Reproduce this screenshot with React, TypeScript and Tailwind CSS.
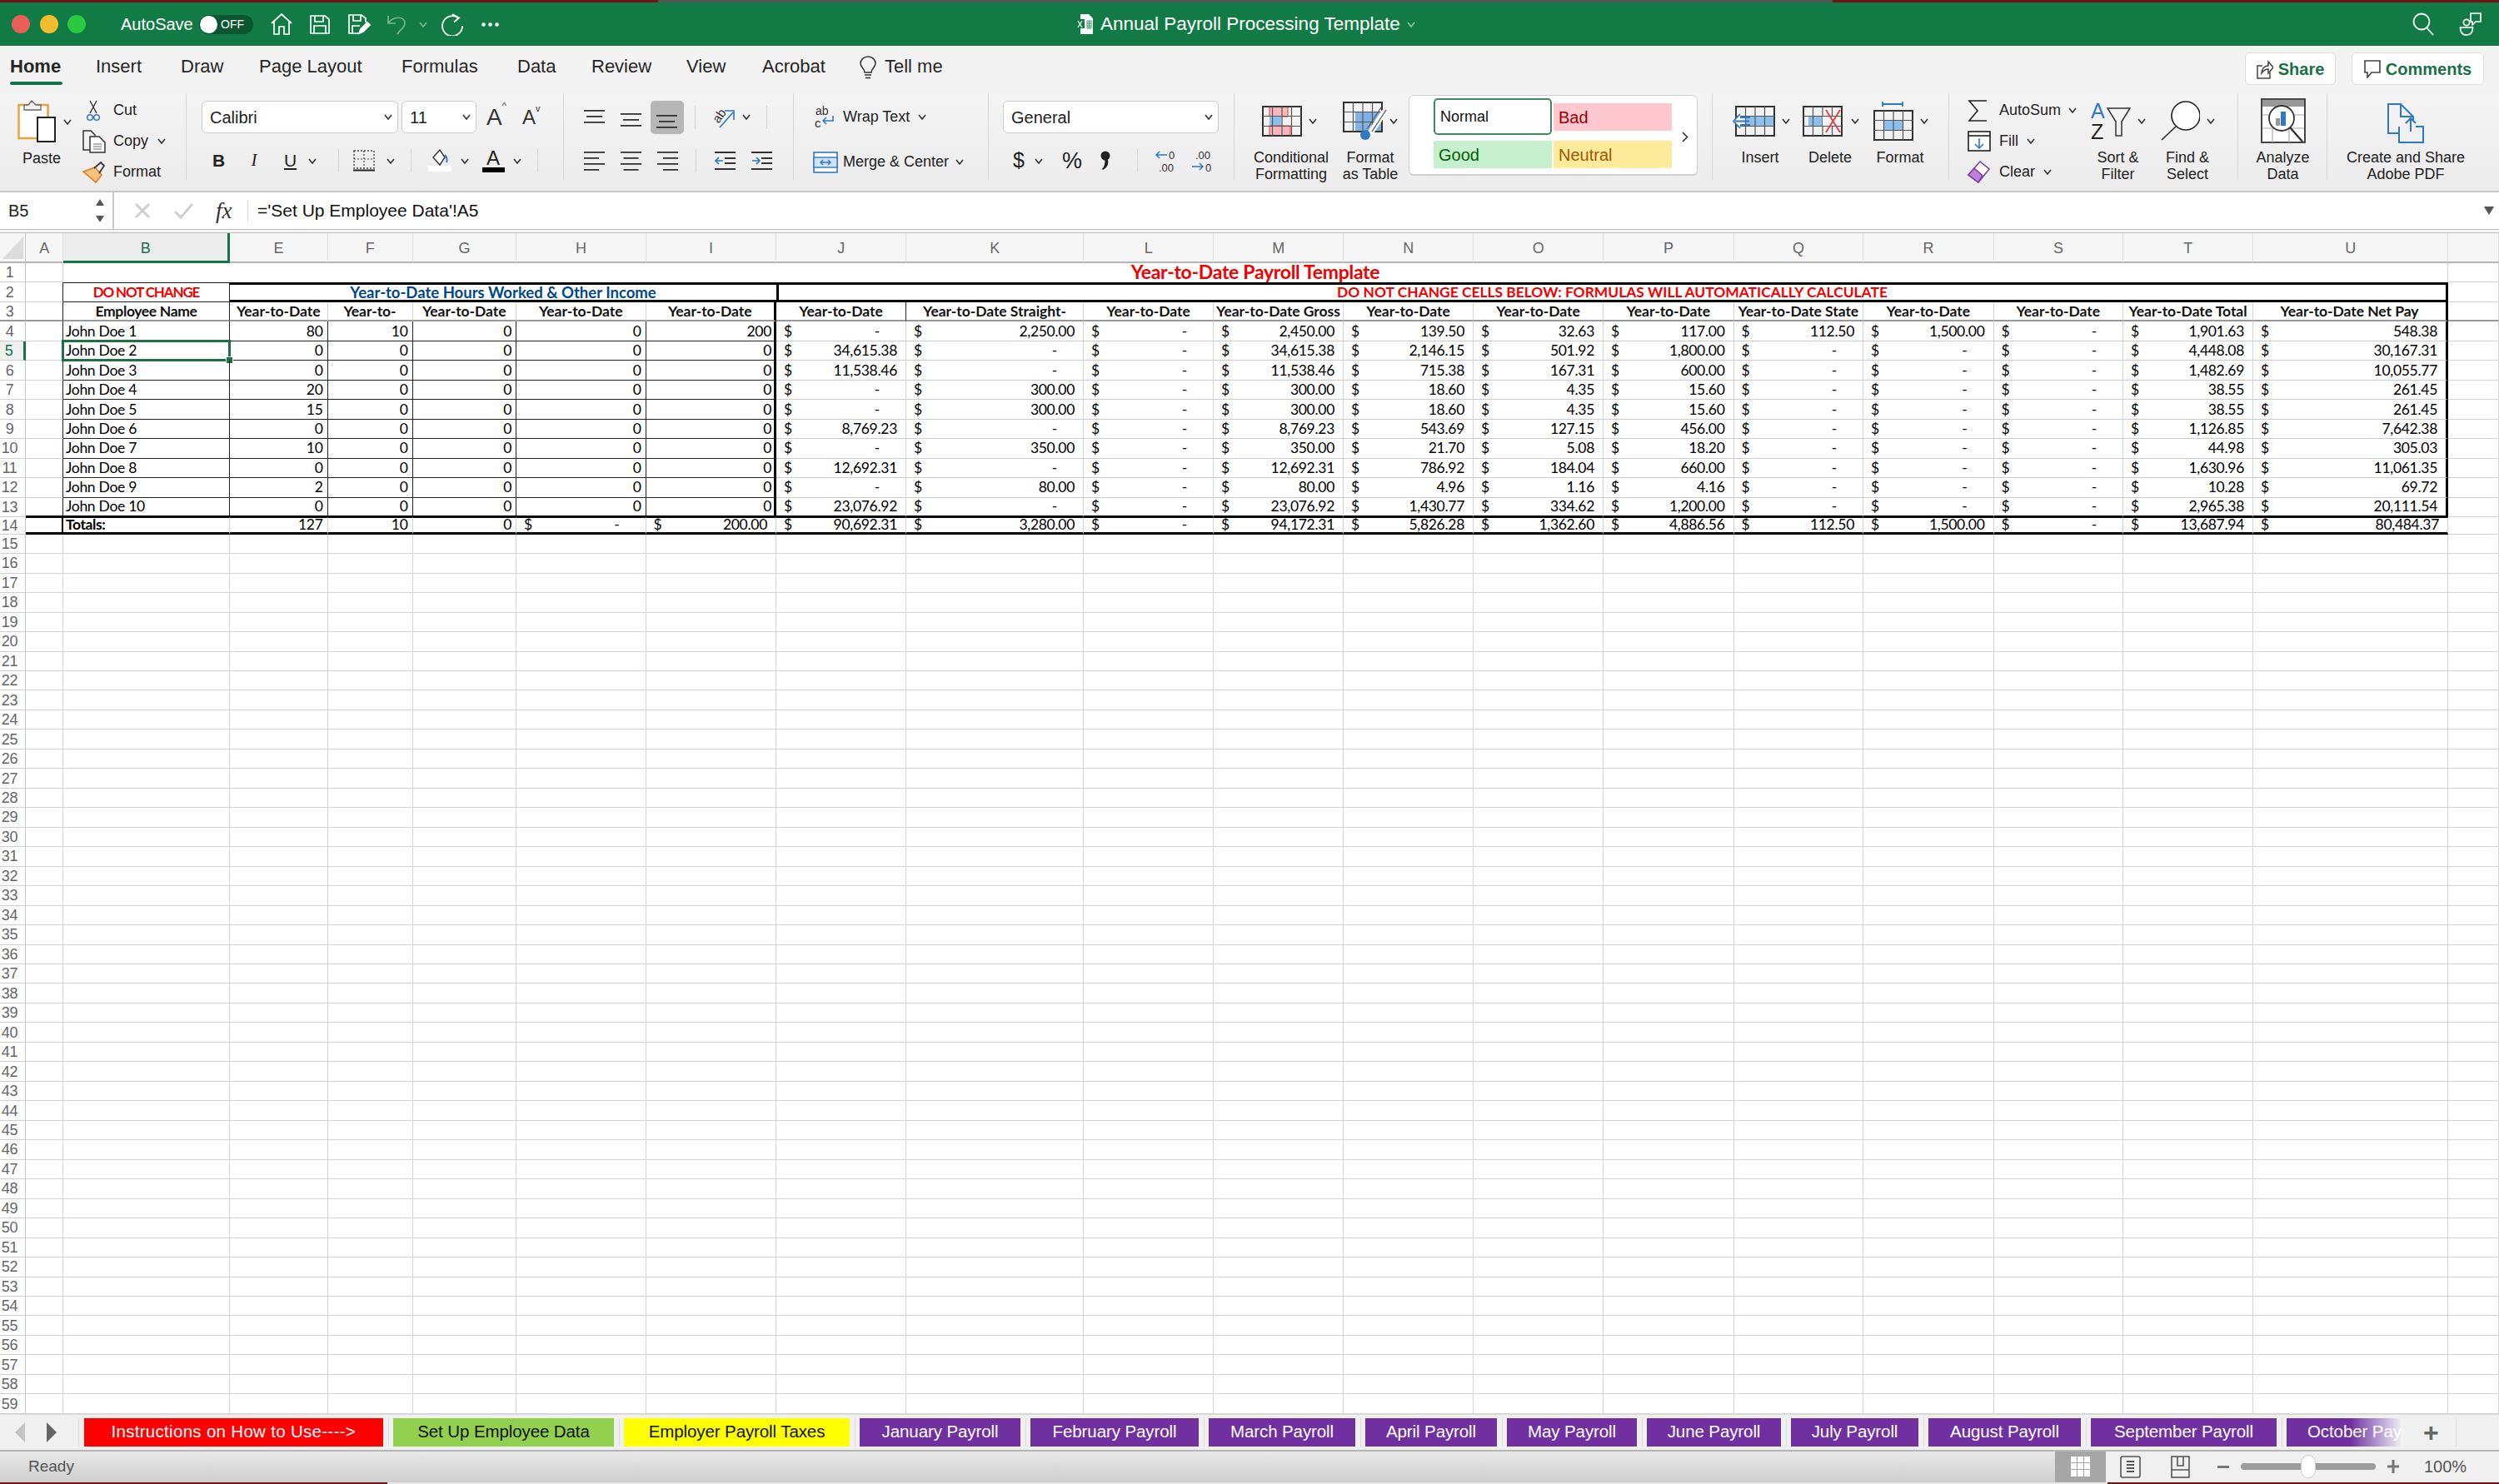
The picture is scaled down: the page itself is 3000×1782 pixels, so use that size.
import React from 'react';

const Chev = ({ c = '#333' }: { c?: string }) => (
  <svg width="10" height="7" viewBox="0 0 10 7" className="shrink-0"><path d="M1 1l4 5 4-5" stroke={c} strokeWidth="1.6" fill="none" /></svg>
);

const VSep = () => <div className="w-px h-[28px] bg-[#d4d4d4] shrink-0" />;

const Lines = ({ ys, align }: { ys: number[]; align: 'l' | 'c' | 'r' }) => (
  <svg width="26" height="26" viewBox="0 0 26 26">
    {ys.map((y, i) => {
      const short = ys.length === 4 && i % 2 === 1;
      const w = short ? 18 : 25;
      const x = align === 'l' ? 0 : align === 'r' ? 25 - w : (25 - w) / 2;
      return <rect key={i} x={x} y={y} width={w} height="1.8" fill="#333" />;
    })}
  </svg>
);

const TopLines = ({ o }: { o: number }) => (
  <svg width="26" height="26" viewBox="0 0 26 26">
    <rect x="0" y={o} width="25" height="1.8" fill="#333" />
    <rect x="3" y={o + 7} width="19" height="1.8" fill="#333" />
    <rect x="0" y={o + 14} width="25" height="1.8" fill="#333" />
  </svg>
);

const Tab = ({ w, children, active }: { w: string; children: React.ReactNode; active?: boolean }) => (
  <div className={w + ' shrink-0 pt-[11px] flex flex-col text-[22px] leading-[28px] text-[#262626]'}>
    <span className={active ? 'font-semibold whitespace-nowrap' : 'whitespace-nowrap'}>{children}</span>
    {active ? <div className="w-[63px] h-[4px] rounded-sm bg-[#12754a] mt-[4px]" /> : null}
  </div>
);

const Big = ({ w, left, icon, chev = true, lines }: { w: string; left: string; icon: React.ReactNode; chev?: boolean; lines: string[] }) => (
  <div className={w + ' shrink-0 flex flex-col items-center h-[104px]'}>
    <div className={left + ' shrink-0 w-full h-[66px] flex items-center gap-[8px]'}>
      {icon}
      {chev ? <Chev /> : null}
    </div>
    <div className="shrink-0 text-[18px] leading-[20px] text-[#222] text-center whitespace-nowrap mt-[1px]">
      {lines.map((l) => <div key={l}>{l}</div>)}
    </div>
  </div>
);

const GridIcon = ({ children }: { children?: React.ReactNode }) => (
  <g>
    {children}
    <rect x="1" y="1" width="46" height="35" fill="none" stroke="#333" strokeWidth="2" />
    <path d="M1 12.5H47M1 24.5H47M12.5 1V36M24 1V36M35.5 1V36" stroke="#555" strokeWidth="1.2" fill="none" />
  </g>
);

const names = Array.from({ length: 10 }, (_, i) => 'John Doe ' + (i + 1));
const E = ['80', '0', '0', '20', '15', '0', '10', '0', '2', '0'];
const Fc = ['10', '0', '0', '0', '0', '0', '0', '0', '0', '0'];
const cur: string[][] = [
  ['-', '34,615.38', '11,538.46', '-', '-', '8,769.23', '-', '12,692.31', '-', '23,076.92', '90,692.31'],
  ['2,250.00', '-', '-', '300.00', '300.00', '-', '350.00', '-', '80.00', '-', '3,280.00'],
  ['-', '-', '-', '-', '-', '-', '-', '-', '-', '-', '-'],
  ['2,450.00', '34,615.38', '11,538.46', '300.00', '300.00', '8,769.23', '350.00', '12,692.31', '80.00', '23,076.92', '94,172.31'],
  ['139.50', '2,146.15', '715.38', '18.60', '18.60', '543.69', '21.70', '786.92', '4.96', '1,430.77', '5,826.28'],
  ['32.63', '501.92', '167.31', '4.35', '4.35', '127.15', '5.08', '184.04', '1.16', '334.62', '1,362.60'],
  ['117.00', '1,800.00', '600.00', '15.60', '15.60', '456.00', '18.20', '660.00', '4.16', '1,200.00', '4,886.56'],
  ['112.50', '-', '-', '-', '-', '-', '-', '-', '-', '-', '112.50'],
  ['1,500.00', '-', '-', '-', '-', '-', '-', '-', '-', '-', '1,500.00'],
  ['-', '-', '-', '-', '-', '-', '-', '-', '-', '-', '-'],
  ['1,901.63', '4,448.08', '1,482.69', '38.55', '38.55', '1,126.85', '44.98', '1,630.96', '10.28', '2,965.38', '13,687.94'],
  ['548.38', '30,167.31', '10,055.77', '261.45', '261.45', '7,642.38', '305.03', '11,061.35', '69.72', '20,111.54', '80,484.37'],
];
const heads = ['Year-to-Date', 'Year-to-Date Straight-', 'Year-to-Date', 'Year-to-Date Gross', 'Year-to-Date', 'Year-to-Date', 'Year-to-Date', 'Year-to-Date State', 'Year-to-Date', 'Year-to-Date', 'Year-to-Date Total', 'Year-to-Date Net Pay'];
const colLetters = ['A', 'B', 'E', 'F', 'G', 'H', 'I', 'J', 'K', 'L', 'M', 'N', 'O', 'P', 'Q', 'R', 'S', 'T', 'U', ''];

const C = ({ className, children }: { className: string; children?: React.ReactNode }) => (
  <div className={'flex items-center min-w-0 whitespace-nowrap ' + className}>{children}</div>
);

const Money = ({ v, className }: { v: string; className: string }) => (
  <C className={'justify-between pl-[9px] pr-[10px] ' + className}>
    <span>$</span>
    <span className={v === '-' ? 'pr-[21px]' : ''}>{v}</span>
  </C>
);

const RowHead = ({ n }: { n: number }) => (
  <div className={'flex items-center justify-center pr-[7px] text-[18px] [font-family:\'Liberation_Sans\',sans-serif] relative ' + (n === 5 ? 'bg-[#f0f0f0] text-[#12754a] border-r-[3px] border-r-[#12754a] border-b border-b-[#cfcfcf]' : n === 3 ? 'text-[#666] bg-white border-r border-r-[#c9c9c9] border-b-2 border-b-[#999]' : 'text-[#666] bg-white border-r border-b border-r-[#c9c9c9] border-b-[#cfcfcf]')}>{n}</div>
);

const Sheet = () => {
  const rows: React.ReactNode[] = [];
  rows.push(
    <div key="corner" className="bg-[#f6f6f6] border-b-2 border-b-[#b5b5b5] border-r border-r-[#c9c9c9] flex items-center pl-[3px]">
      <svg width="25" height="27" viewBox="0 0 25 27"><polygon points="25,0 25,27 0,27" fill="#dcdcdc" /></svg>
    </div>
  );
  colLetters.forEach((l) => {
    rows.push(
      <div key={'h' + l} className={'flex items-center justify-center pt-[2px] text-[18px] [font-family:\'Liberation_Sans\',sans-serif] ' + (l === 'B' ? 'bg-[#ececec] text-[#12754a] border-b-[3px] border-b-[#12754a] border-r-[3px] border-r-[#12754a]' : 'bg-[#f6f6f6] text-[#666] border-b-2 border-b-[#b5b5b5] border-r border-r-[#dedede]')}>{l}</div>
    );
  });
  const grid = 'border-r border-b border-r-[#d4d4d4] border-b-[#d4d4d4]';
  rows.push(<RowHead key="r1" n={1} />);
  rows.push(<C key="a1" className={grid} />);
  rows.push(<C key="t1" className="col-span-18 justify-center pb-[2px] border-r border-r-[#d4d4d4] font-bold text-[23px] leading-[23px] text-[#f00000]">Year-to-Date Payroll Template</C>);
  rows.push(<C key="v1" className={grid} />);
  rows.push(<RowHead key="r2" n={2} />);
  rows.push(<C key="a2" className="border-r border-b border-r-[#222] border-b-[#d4d4d4]" />);
  rows.push(<C key="b2" className="justify-center font-bold text-[17px] text-[#f00000] tracking-[-1.15px] border-r border-t border-b border-[#222]">DO NOT CHANGE</C>);
  rows.push(<C key="e2" className="col-span-5 justify-center font-bold text-[18.5px] text-[#00468c] tracking-[0px] border-t-[3px] border-b-[3px] border-black">Year-to-Date Hours Worked &amp; Other Income</C>);
  rows.push(<C key="j2" className="col-span-12 justify-center font-bold text-[17.4px] text-[#f00000] tracking-[0px] border-t-[3px] border-b-[3px] border-l-[3px] border-r-[3px] border-black">DO NOT CHANGE CELLS BELOW: FORMULAS WILL AUTOMATICALLY CALCULATE</C>);
  rows.push(<C key="v2" className={grid} />);
  rows.push(<RowHead key="r3" n={3} />);
  rows.push(<C key="a3" className="border-r border-b-2 border-r-[#222] border-b-[#999]" />);
  rows.push(<C key="b3" className="justify-center font-bold text-[17.5px] tracking-[-0.35px] text-[#111] border-r border-b-2 border-r-[#222] border-b-[#999]">Employee Name</C>);
  const hs = 'justify-center font-bold text-[17.5px] tracking-[-0.05px] text-[#111] border-b-2 border-b-[#999] ';
  rows.push(<C key="e3" className={hs + 'border-r border-r-[#d4d4d4]'}>Year-to-Date</C>);
  rows.push(<C key="f3" className={hs + 'border-r border-r-[#d4d4d4]'}>Year-to-</C>);
  rows.push(<C key="g3" className={hs + 'border-r border-r-[#d4d4d4]'}>Year-to-Date</C>);
  rows.push(<C key="h3" className={hs + 'border-r border-r-[#d4d4d4]'}>Year-to-Date</C>);
  rows.push(<C key="i3" className={hs + 'border-r-[3px] border-r-black'}>Year-to-Date</C>);
  heads.forEach((h, i) => {
    rows.push(<C key={'hd' + i} className={hs + (i === 0 ? 'border-r border-r-[#222]' : i === 11 ? 'border-r-[3px] border-r-black' : 'border-r border-r-[#d4d4d4]')}>{h}</C>);
  });
  rows.push(<C key="v3" className="border-r border-b-2 border-r-[#d4d4d4] border-b-[#999]" />);
  names.forEach((name, i) => {
    const n = i + 4;
    const last = i === 9;
    const black = last ? 'border-r border-b-2 border-r-[#222] border-b-black' : 'border-r border-b border-r-[#222] border-b-[#222]';
    rows.push(<RowHead key={'r' + n} n={n} />);
    rows.push(<C key={'a' + n} className={last ? 'border-r border-b-2 border-r-[#222] border-b-black' : 'border-r border-b border-r-[#222] border-b-[#d4d4d4]'} />);
    rows.push(
      <div key={'b' + n} className={'relative flex items-center pl-[3px] whitespace-nowrap tracking-[-0.3px] ' + black}>
        {name}
        {n === 5 ? (
          <>
            <div className="absolute -left-[2px] -top-[2px] -right-[2px] -bottom-[2px] border-[3px] border-[#1f7045]" />
            <div className="absolute -right-[5px] -bottom-[5px] w-[9px] h-[9px] bg-[#1f7045] border border-white" />
          </>
        ) : null}
      </div>
    );
    const num = 'justify-end pr-[5px] ' + black;
    rows.push(<C key={'e' + n} className={num}>{E[i]}</C>);
    rows.push(<C key={'f' + n} className={num}>{Fc[i]}</C>);
    rows.push(<C key={'g' + n} className={num}>0</C>);
    rows.push(<C key={'h' + n} className={num}>0</C>);
    rows.push(<C key={'i' + n} className={last ? 'justify-end pr-[3px] border-r-[3px] border-b-2 border-r-black border-b-black' : 'justify-end pr-[3px] border-r-[3px] border-b border-r-black border-b-[#222]'}>{i === 0 ? '200' : '0'}</C>);
    cur.forEach((col, k) => {
      const cls = last
        ? k === 11 ? 'border-r-[3px] border-b-2 border-r-black border-b-black' : 'border-r border-b-2 border-r-[#d4d4d4] border-b-black'
        : k === 11 ? 'border-r-[3px] border-b border-r-black border-b-[#cdcdcd]' : 'border-r border-b border-r-[#d4d4d4] border-b-[#cdcdcd]';
      rows.push(<Money key={'c' + k + n} v={col[i]} className={cls} />);
    });
    rows.push(<C key={'v' + n} className={grid} />);
  });
  const t = 'border-t border-b-[3px] border-r border-t-black border-b-black border-r-[#d4d4d4] ';
  rows.push(<RowHead key="r14" n={14} />);
  rows.push(<C key="a14" className="border-t border-b-[3px] border-r-2 border-t-black border-b-black border-r-black" />);
  rows.push(<C key="b14" className={t + 'pl-[3px] font-bold tracking-[-0.4px]'}>Totals:</C>);
  rows.push(<C key="e14" className={t + 'justify-end pr-[5px]'}>127</C>);
  rows.push(<C key="f14" className={t + 'justify-end pr-[5px]'}>10</C>);
  rows.push(<C key="g14" className={t + 'justify-end pr-[5px]'}>0</C>);
  rows.push(<Money key="h14" v="-" className={t} />);
  rows.push(<Money key="i14" v="200.00" className={t} />);
  cur.forEach((col, k) => rows.push(<Money key={'t' + k} v={col[10]} className={t} />));
  rows.push(<C key="v14" className={grid} />);
  for (let n = 15; n <= 59; n++) {
    rows.push(<RowHead key={'r' + n} n={n} />);
    for (let c = 0; c < 20; c++) rows.push(<div key={'x' + n + '-' + c} className={grid} />);
  }
  return (
    <div className="shrink-0 grid grid-cols-[31px_45px_200px_117.5px_102px_124.5px_155.5px_156.5px_156px_213px_156px_156px_156px_156px_156.5px_155.5px_156.5px_155.5px_156px_234px_61px] grid-rows-[36px_repeat(13,23.47px)_20.6px_repeat(45,23.47px)] bg-white text-[17.5px] leading-[18px] text-black tracking-[-0.3px] [font-family:Lato,sans-serif]">
      {rows}
    </div>
  );
};

const SheetTab = ({ w, bg, dark, children }: { w: string; bg: string; dark?: boolean; children: React.ReactNode }) => (
  <div className={w + ' ' + bg + ' h-[34px] shrink-0 flex items-center justify-center text-[20.5px] tracking-[-0.1px] whitespace-nowrap ' + (dark ? 'text-[#111]' : 'text-white')}>{children}</div>
);
const TabSep = () => <div className="w-px h-[34px] bg-[#dcdcdc] shrink-0" />;

export default function App() {
  return (
    <div className="w-[3000px] h-[1782px] overflow-hidden flex flex-col bg-[#f3f3f3] [font-family:'Liberation_Sans',sans-serif]">
      <div className="h-[3px] shrink-0 flex">
        <div className="w-[790px] bg-[#6e1414]" />
        <div className="w-[1410px] bg-[#555]" />
        <div className="flex-1 bg-[#6e1414]" />
      </div>
      {/* title bar */}
      <div className="h-[52px] shrink-0 bg-[#127a44] flex items-center text-white">
        <div className="ml-[14px] w-[22px] h-[22px] rounded-full bg-[#ec5f57]" />
        <div className="ml-[12px] w-[22px] h-[22px] rounded-full bg-[#f5bd2e]" />
        <div className="ml-[11px] w-[22px] h-[22px] rounded-full bg-[#2bc940]" />
        <div className="ml-[42px] w-[94px] text-[20px] whitespace-nowrap">AutoSave</div>
        <div className="w-[65px] h-[23px] rounded-full bg-[#0d5530] flex items-center">
          <div className="ml-[1px] w-[21px] h-[21px] rounded-full bg-white" />
          <span className="ml-[4px] text-[14px] font-medium">OFF</span>
        </div>
        <svg className="ml-[20px]" width="28" height="26" viewBox="0 0 28 26" fill="none" stroke="white" strokeWidth="1.7"><path d="M2 12L14 1l12 11M5 10v15h6v-9h6v9h6V10" /></svg>
        <svg className="ml-[19px]" width="26" height="25" viewBox="0 0 26 25" fill="none" stroke="white" strokeWidth="1.7"><path d="M2 2h17l5 4v17H2zM7 2v7h10V2M6 23v-9h14v9" /></svg>
        <svg className="ml-[20px]" width="28" height="26" viewBox="0 0 28 26" fill="none" stroke="white" strokeWidth="1.7"><path d="M13 24H2V2h15l5 4v5M7 2v7h9V2M6 24v-9h9" /><path d="M14 24l2-5 8-8 3 3-8 8z" fill="white" /></svg>
        <svg className="ml-[19px]" width="25" height="26" viewBox="0 0 25 26" fill="none" stroke="#7eb596" strokeWidth="1.7"><path d="M2 3v9h9M2 12C8 3 22 3 22 12c0 5-6 8-9 13" /></svg>
        <div className="ml-[14px]"><Chev c="#7eb596" /></div>
        <svg className="ml-[16px]" width="28" height="27" viewBox="0 0 28 27" fill="none" stroke="white" strokeWidth="1.8"><path d="M21 5.5A12 12 0 1 0 26 15M14 1l8 4.5-6 5" /></svg>
        <svg className="ml-[21px]" width="21" height="5" viewBox="0 0 21 5" fill="white"><circle cx="2.5" cy="2.5" r="2.3" /><circle cx="10.5" cy="2.5" r="2.3" /><circle cx="18.5" cy="2.5" r="2.3" /></svg>
        <svg className="ml-[693px]" width="20" height="24" viewBox="0 0 20 24"><path d="M5 0h10l5 5v19H5z" fill="white" /><rect x="0" y="6" width="10" height="11" fill="#127a44" /><path d="M2 8l5 8M7 8l-5 8" stroke="white" strokeWidth="1.2" /><path d="M13 8h5v9h-5zM13 11h5M13 14h5M15.5 8v9" stroke="#127a44" strokeWidth="0.8" fill="none" /></svg>
        <span className="ml-[9px] w-[366px] text-[22.5px] whitespace-nowrap">Annual Payroll Processing Template</span>
        <div className="ml-[2px]"><Chev c="#8fc4a6" /></div>
        <svg className="ml-[1197px]" width="26" height="28" viewBox="0 0 26 28" fill="none" stroke="white" strokeWidth="1.8"><circle cx="11" cy="11" r="9.5" /><path d="M17 18l8 9" /></svg>
        <svg className="ml-[30px]" width="28" height="28" viewBox="0 0 28 28" fill="none" stroke="white" strokeWidth="1.7"><circle cx="9" cy="12" r="3.6" /><path d="M1.5 18h15c0 5-2 9-7.5 9S1.5 23 1.5 18z" /><path d="M14 1h12v10h-6l-4 4v-4h-2z" /></svg>
      </div>
      {/* tabs */}
      <div className="h-[57px] shrink-0 flex pl-[12px]">
        <Tab w="w-[103px]" active>Home</Tab>
        <Tab w="w-[102px]">Insert</Tab>
        <Tab w="w-[94px]">Draw</Tab>
        <Tab w="w-[171px]">Page Layout</Tab>
        <Tab w="w-[139px]">Formulas</Tab>
        <Tab w="w-[89px]">Data</Tab>
        <Tab w="w-[114px]">Review</Tab>
        <Tab w="w-[91px]">View</Tab>
        <Tab w="w-[117px]">Acrobat</Tab>
        <svg className="mt-[12px] shrink-0" width="20" height="28" viewBox="0 0 20 28" fill="none" stroke="#333" strokeWidth="1.5"><path d="M6 20c0-5-5-6-5-11a9 8 0 0 1 18 0c0 5-5 6-5 11z" /><path d="M6 23h8M7 26.5h6" /></svg>
        <Tab w="w-[122px] ml-[10px]">Tell me</Tab>
        <div className="ml-[1511px] mt-[8px] w-[109px] h-[39px] rounded-[5px] bg-white border border-[#dcdcdc] flex items-center justify-center gap-[6px] text-[20px] font-bold text-[#1a7147] shrink-0">
          <svg width="20" height="24" viewBox="0 0 20 24" fill="none" stroke="#444" strokeWidth="1.5"><path d="M7 8H1v15h15v-7" /><path d="M6 17c0-6 4-9 8-9V3l6 7-6 7v-5c-4 0-6 2-8 5z" /></svg>
          <span>Share</span>
        </div>
        <div className="ml-[19px] mt-[8px] w-[159px] h-[39px] rounded-[5px] bg-white border border-[#dcdcdc] flex items-center justify-center gap-[6px] text-[20px] font-bold text-[#1a7147] shrink-0">
          <svg width="20" height="22" viewBox="0 0 20 22" fill="none" stroke="#444" strokeWidth="1.6"><path d="M1 1h18v14H9l-5 6v-6H1z" /></svg>
          <span>Comments</span>
        </div>
      </div>
      {/* ribbon */}
      <div className="h-[119px] shrink-0 flex bg-gradient-to-b from-[#f4f4f4] to-[#ececec] border-b-2 border-[#c6c6c6] text-[18px] text-[#222]">
        {/* clipboard */}
        <div className="w-[224px] h-[104px] shrink-0 border-r border-[#d6d6d6] flex">
          <div className="w-[99px] flex flex-col shrink-0">
            <div className="flex items-center h-[62px] pl-[21px] pt-[6px] gap-[8px] shrink-0">
              <svg width="47" height="52" viewBox="0 0 47 52"><rect x="1.5" y="6" width="35" height="40" fill="#fdfdfd" stroke="#e8a33d" strokeWidth="2.5" /><path d="M8 12V6h5l4-5 5 5h6v6z" fill="#f1f1f1" stroke="#666" strokeWidth="1.3" /><rect x="24" y="21" width="21" height="29" fill="white" stroke="#222" strokeWidth="2" /></svg>
              <Chev />
            </div>
            <div className="w-full pl-[27px] leading-[20px] mt-[6px] shrink-0">Paste</div>
          </div>
          <div className="flex flex-col pt-[2px]">
            <div className="h-[37px] flex items-center shrink-0">
              <div className="w-[37px]">
                <svg className="ml-[4px]" width="18" height="26" viewBox="0 0 18 26" fill="none"><path d="M5 1l8 15M13 1L5 16" stroke="#333" strokeWidth="1.4" /><circle cx="5" cy="21" r="3.3" stroke="#2f78c4" strokeWidth="1.5" /><circle cx="13" cy="21" r="3.3" stroke="#2f78c4" strokeWidth="1.5" /></svg>
              </div>
              <span>Cut</span>
            </div>
            <div className="h-[37px] flex items-center shrink-0">
              <div className="w-[37px]">
                <svg width="28" height="28" viewBox="0 0 28 28" fill="none" stroke="#333" strokeWidth="1.5"><path d="M9 24H1V1h9l5 5v2" /><path d="M9 8h11l7 7v12H9z" fill="white" /><path d="M13 17h10M13 20h10M13 23h10" stroke="#666" strokeWidth="1" /></svg>
              </div>
              <span>Copy</span>
              <div className="ml-[11px]"><Chev /></div>
            </div>
            <div className="h-[37px] flex items-center shrink-0">
              <div className="w-[37px]">
                <svg width="27" height="26" viewBox="0 0 27 26" fill="none"><path d="M1 12l14-5 8 9-7 9z" fill="#f6c27d" stroke="#e07f1f" strokeWidth="1.6" /><path d="M14 8L22 1l4 4-6 9" stroke="#333" strokeWidth="1.8" /></svg>
              </div>
              <span>Format</span>
            </div>
          </div>
        </div>
        {/* font */}
        <div className="w-[453px] h-[104px] shrink-0 border-r border-[#d6d6d6] flex flex-col">
          <div className="mt-[9px] h-[39px] flex items-center ml-[18px] shrink-0">
            <div className="w-[236px] h-[39px] bg-white border border-[#cbcbcb] rounded-[6px] flex items-center justify-between pl-[9px] pr-[6px] text-[20px]"><span>Calibri</span><Chev /></div>
            <div className="ml-[4px] w-[90px] h-[39px] bg-white border border-[#cbcbcb] rounded-[6px] flex items-center justify-between pl-[9px] pr-[6px] text-[20px]"><span>11</span><Chev /></div>
            <div className="ml-[12px] w-[28px] text-[28px] font-light flex items-start text-[#333]"><span>A</span><span className="text-[11px] leading-[14px]">^</span></div>
            <div className="ml-[15px] w-[28px] text-[24px] font-light flex items-start text-[#333]"><span>A</span><span className="text-[11px] leading-[14px]">v</span></div>
          </div>
          <div className="mt-[18px] h-[30px] flex items-center ml-[18px] shrink-0">
            <div className="w-[41px] flex justify-center text-[21px] font-bold">B</div>
            <div className="w-[44px] flex justify-center text-[21px] italic [font-family:'Liberation_Serif',serif]">I</div>
            <div className="w-[43px] flex justify-center text-[21px] underline">U</div>
            <div className="w-[17px]"><Chev /></div>
            <div className="w-[19px]" />
            <VSep />
            <svg className="ml-[17px]" width="27" height="26" viewBox="0 0 27 26" fill="none"><rect x="1" y="1" width="24" height="21" stroke="#444" strokeWidth="1.4" strokeDasharray="2 2" /><path d="M13 1v21M1 11h24" stroke="#444" strokeWidth="1.2" strokeDasharray="2 2" /><path d="M0 24.5h26" stroke="#222" strokeWidth="2" /></svg>
            <div className="ml-[13px]"><Chev /></div>
            <div className="ml-[19px]"><VSep /></div>
            <svg className="ml-[20px]" width="28" height="28" viewBox="0 0 28 28" fill="none"><path d="M6 10L14 1l6 9-6 9z" fill="#fff" stroke="#333" strokeWidth="1.4" /><path d="M20 7c3 3 3 7 2 9" stroke="#2f78c4" strokeWidth="2" /><rect x="0" y="20" width="28" height="7" fill="#fff" /></svg>
            <div className="ml-[11px]"><Chev /></div>
            <div className="ml-[15px] w-[28px] flex flex-col items-center">
              <span className="text-[24px] leading-[22px] font-light">A</span>
              <div className="w-[27px] h-[6px] bg-black" />
            </div>
            <div className="ml-[10px]"><Chev /></div>
            <div className="ml-[19px]"><VSep /></div>
          </div>
        </div>
        {/* alignment */}
        <div className="w-[276px] h-[104px] shrink-0 border-r border-[#d6d6d6] flex flex-col">
          <div className="mt-[9px] h-[39px] flex items-center ml-[15px] shrink-0">
            <div className="w-[44px] flex justify-center"><TopLines o={4} /></div>
            <div className="w-[44px] flex justify-center"><TopLines o={8} /></div>
            <div className="w-[40px] h-[40px] ml-[1px] rounded-[5px] bg-[#b6b6b6] flex items-center justify-center"><TopLines o={10} /></div>
            <div className="ml-[13px]"><VSep /></div>
            <svg className="ml-[21px] overflow-visible" width="28" height="26" viewBox="0 0 28 26" fill="none"><text x="0" y="16" fontSize="15" fill="#333" fontFamily="Liberation Sans" transform="rotate(-55 8 12)">ab</text><path d="M8 25l16-18M14 5h11v11" stroke="#2f78c4" strokeWidth="1.6" /></svg>
            <div className="ml-[7px]"><Chev /></div>
            <div className="ml-[19px]"><VSep /></div>
          </div>
          <div className="mt-[18px] h-[30px] flex items-center ml-[15px] shrink-0">
            <div className="w-[44px] flex justify-center"><Lines ys={[2, 9, 16, 23]} align="l" /></div>
            <div className="w-[44px] flex justify-center"><Lines ys={[2, 9, 16, 23]} align="c" /></div>
            <div className="w-[44px] flex justify-center"><Lines ys={[2, 9, 16, 23]} align="r" /></div>
            <div className="ml-[11px]"><VSep /></div>
            <svg className="ml-[22px]" width="26" height="26" viewBox="0 0 26 26" fill="none"><path d="M0 3h25M12 10h13M12 16h13M0 23h25" stroke="#333" strokeWidth="1.8" /><path d="M10 13H1M5 9l-4 4 4 4" stroke="#2f78c4" strokeWidth="1.7" /></svg>
            <svg className="ml-[18px]" width="26" height="26" viewBox="0 0 26 26" fill="none"><path d="M0 3h25M12 10h13M12 16h13M0 23h25" stroke="#333" strokeWidth="1.8" /><path d="M1 13h9M6 9l4 4-4 4" stroke="#2f78c4" strokeWidth="1.7" /></svg>
          </div>
        </div>
        {/* wrap */}
        <div className="w-[234px] h-[104px] shrink-0 border-r border-[#d6d6d6] flex flex-col">
          <div className="mt-[9px] h-[39px] flex items-center ml-[25px] shrink-0">
            <svg className="shrink-0 overflow-visible" width="28" height="28" viewBox="0 0 28 28" fill="none"><text x="1" y="11" fontSize="14" fill="#333" fontFamily="Liberation Sans">ab</text><text x="0" y="26" fontSize="15" fill="#333" fontFamily="Liberation Sans">c</text><path d="M22 12v6H10M14 14l-4 4 4 4" stroke="#2f78c4" strokeWidth="1.5" /></svg>
            <span className="ml-[6px] whitespace-nowrap">Wrap Text</span>
            <div className="ml-[10px]"><Chev /></div>
          </div>
          <div className="mt-[18px] h-[30px] flex items-center ml-[23px] pt-[3px] shrink-0">
            <svg className="shrink-0" width="30" height="26" viewBox="0 0 30 26" fill="none"><rect x="1" y="1" width="28" height="24" fill="#fff" stroke="#2f78c4" strokeWidth="1.6" /><rect x="1" y="7" width="28" height="12" fill="#cfe3f6" stroke="#2f78c4" strokeWidth="1.4" /><path d="M9 13h12M12 10l-3 3 3 3M18 10l3 3-3 3" stroke="#2f78c4" strokeWidth="1.4" /></svg>
            <span className="ml-[6px] whitespace-nowrap">Merge &amp; Center</span>
            <div className="ml-[8px]"><Chev /></div>
          </div>
        </div>
        {/* number */}
        <div className="w-[295px] h-[104px] shrink-0 border-r border-[#d6d6d6] flex flex-col">
          <div className="mt-[9px] h-[39px] flex items-center ml-[17px] shrink-0">
            <div className="w-[259px] h-[39px] bg-white border border-[#cbcbcb] rounded-[6px] flex items-center justify-between pl-[9px] pr-[6px] text-[20px]"><span>General</span><Chev /></div>
          </div>
          <div className="mt-[18px] h-[30px] flex items-center ml-[29px] shrink-0">
            <span className="text-[25px] font-light w-[16px]">$</span>
            <div className="ml-[10px]"><Chev /></div>
            <span className="ml-[23px] text-[27px] w-[28px] font-light">%</span>
            <svg className="ml-[18px] shrink-0" width="12" height="24" viewBox="0 0 12 24" fill="#222"><circle cx="6" cy="6" r="5.5" /><path d="M8 8c3 6 1 12-5 15l-1-1c3-3 4-7 3-12z" /></svg>
            <div className="ml-[32px]"><VSep /></div>
            <svg className="ml-[20px] overflow-visible" width="28" height="30" viewBox="0 0 28 30" fill="none"><path d="M15 8H2M6 4L2 8l4 4" stroke="#2f78c4" strokeWidth="1.5" /><text x="17" y="13" fontSize="13" fill="#333" fontFamily="Liberation Sans">0</text><text x="5" y="28" fontSize="13" fill="#333" fontFamily="Liberation Sans">.00</text></svg>
            <svg className="ml-[16px] overflow-visible" width="28" height="30" viewBox="0 0 28 30" fill="none"><text x="5" y="13" fontSize="13" fill="#333" fontFamily="Liberation Sans">.00</text><path d="M1 22h13M10 18l4 4-4 4" stroke="#2f78c4" strokeWidth="1.5" /><text x="17" y="28" fontSize="13" fill="#333" fontFamily="Liberation Sans">0</text></svg>
          </div>
        </div>
        {/* styles */}
        <div className="w-[574px] h-[104px] shrink-0 border-r border-[#d6d6d6] flex">
          <Big w="w-[100px] ml-[18px]" left="pl-[15px]" lines={['Conditional', 'Formatting']} icon={
            <svg className="shrink-0" width="48" height="37" viewBox="0 0 48 37"><GridIcon><rect x="9" y="1" width="22" height="12" fill="#f8b7bd" stroke="#e8383d" strokeWidth="1" /><rect x="9" y="13" width="14" height="11" fill="#8dbfec" /><rect x="9" y="24" width="25" height="12" fill="#f8b7bd" stroke="#e8383d" strokeWidth="1" /></GridIcon></svg>
          } />
          <Big w="w-[90px]" left="pl-[12px]" lines={['Format', 'as Table']} icon={
            <svg className="shrink-0 -mr-[8px]" width="56" height="46" viewBox="0 0 56 46" fill="none"><GridIcon><rect x="15" y="12" width="32" height="24" fill="#7fb2e5" /></GridIcon><path d="M50 12L33 38" stroke="#fff" strokeWidth="7" /><path d="M52 10L35 36M46 7L29 33" stroke="#555" strokeWidth="1.3" /><circle cx="27" cy="40" r="6" fill="#2f78c4" /></svg>
          } />
          <div className="ml-[1px] mt-[2px] w-[347px] h-[97px] rounded-[6px] bg-white border border-[#cfcfcf] border-b-2 flex shrink-0 text-[20px]">
            <div className="ml-[29px] mt-[3px] grid grid-cols-[142px_142px] grid-rows-[44px_40px] gap-x-[2px] gap-y-[7px] w-[286px]">
              <div className="h-[44px] rounded-[5px] border-2 border-[#3f8a63] flex items-center pl-[6px] text-[#111] bg-white text-[18px]">Normal</div>
              <div className="h-[33px] mt-[6px] bg-[#ffc7ce] flex items-center pl-[6px] text-[#9c0006]">Bad</div>
              <div className="h-[33px] bg-[#c6efce] flex items-center pl-[6px] text-[#006100]">Good</div>
              <div className="h-[33px] bg-[#ffeb9c] flex items-center pl-[6px] text-[#9c5700]">Neutral</div>
            </div>
            <svg className="ml-[12px] mt-[43px]" width="8" height="13" viewBox="0 0 8 13" fill="none" stroke="#333" strokeWidth="1.6"><path d="M1 1l5.5 5.5L1 12" /></svg>
          </div>
        </div>
        {/* cells */}
        <div className="w-[284px] h-[104px] shrink-0 border-r border-[#d6d6d6] flex">
          <Big w="w-[82px] ml-[16px]" left="pl-[8px]" lines={['Insert']} icon={
            <svg className="shrink-0" width="51" height="37" viewBox="0 0 51 37" fill="none"><g transform="translate(3 0)"><GridIcon><rect x="12" y="13" width="34" height="11" fill="#8dbfec" /></GridIcon></g><path d="M20 18.5H3M9 10l-8 8.5 8 8.5M9 14h12M9 23h12" stroke="#2f78c4" strokeWidth="1.8" fill="#fff" /></svg>
          } />
          <Big w="w-[74px] ml-[6px]" left="pl-[4px]" lines={['Delete']} icon={
            <svg className="shrink-0" width="50" height="37" viewBox="0 0 50 37" fill="none"><GridIcon><rect x="7" y="13" width="20" height="11" fill="#8dbfec" /></GridIcon><rect x="24" y="13" width="22" height="11" fill="#f4f4f4" /><path d="M28 5l17 27M45 5L28 32" stroke="#e8383d" strokeWidth="1.8" /></svg>
          } />
          <Big w="w-[74px] ml-[10px]" left="pl-[5px]" lines={['Format']} icon={
            <svg className="shrink-0" width="48" height="47" viewBox="0 0 48 47" fill="none"><path d="M11 3h24M11 0v6M35 0v6" stroke="#2f78c4" strokeWidth="1.8" /><g transform="translate(0 10)"><GridIcon><rect x="12" y="13" width="24" height="11" fill="#8dbfec" /></GridIcon></g></svg>
          } />
        </div>
        {/* editing */}
        <div className="w-[347px] h-[104px] shrink-0 border-r border-[#d6d6d6] flex">
          <div className="ml-[22px] w-[143px] flex flex-col pt-[2px] shrink-0">
            <div className="h-[37px] flex items-center shrink-0">
              <div className="w-[38px]"><svg width="24" height="26" viewBox="0 0 24 26" fill="none" stroke="#222" strokeWidth="1.6"><path d="M23 1H2l10 12L2 25h21" /></svg></div>
              <span>AutoSum</span>
              <div className="ml-[9px]"><Chev /></div>
            </div>
            <div className="h-[37px] flex items-center shrink-0">
              <div className="w-[38px]"><svg width="28" height="25" viewBox="0 0 28 25" fill="#fff" stroke="#222" strokeWidth="1.6"><rect x="1" y="1" width="26" height="23" /><path d="M1 6h26" /><path d="M14 9v12M9 16l5 5 5-5" stroke="#2f78c4" fill="none" /></svg></div>
              <span>Fill</span>
              <div className="ml-[10px]"><Chev /></div>
            </div>
            <div className="h-[37px] flex items-center shrink-0">
              <div className="w-[38px]"><svg width="27" height="27" viewBox="0 0 27 27" strokeWidth="1.5"><path d="M1 17L15 1l11 9-13 16z" fill="#fff" stroke="#7d3aa6" /><path d="M1 17l7-8 10 9-5 8z" fill="#c07fd9" stroke="#7d3aa6" /></svg></div>
              <span>Clear</span>
              <div className="ml-[10px]"><Chev /></div>
            </div>
          </div>
          <Big w="w-[75px]" left="pl-[5px]" lines={['Sort &', 'Filter']} icon={
            <svg className="shrink-0 overflow-visible" width="48" height="46" viewBox="0 0 48 46" fill="none"><text x="0" y="20" fontSize="25" fill="#2f78c4" fontFamily="Liberation Sans">A</text><text x="0" y="45" fontSize="25" fill="#222" fontFamily="Liberation Sans">Z</text><path d="M20 8h27L37 24v17h-7V24z" stroke="#333" strokeWidth="1.5" /></svg>
          } />
          <Big w="w-[72px] ml-[10px]" left="pl-[3px]" lines={['Find &', 'Select']} icon={
            <svg className="shrink-0" width="48" height="48" viewBox="0 0 48 48" fill="none" stroke="#222" strokeWidth="1.6"><circle cx="31" cy="18" r="17" fill="#fff" /><path d="M19 31L2 47" /></svg>
          } chev={true} />
        </div>
        {/* analyze */}
        <div className="w-[107px] h-[104px] shrink-0 border-r border-[#d6d6d6] flex">
          <Big w="w-[107px]" left="justify-center" chev={false} lines={['Analyze', 'Data']} icon={
            <svg className="shrink-0" width="54" height="54" viewBox="0 0 54 54" fill="none"><rect x="1" y="1" width="52" height="52" fill="#fff" stroke="#333" strokeWidth="1.8" /><rect x="2" y="2" width="50" height="8" fill="#999" /><path d="M2 20h50M2 36h50M14 36v17M34 36v17" stroke="#aaa" strokeWidth="1.2" /><circle cx="25" cy="24" r="15" fill="#fff" stroke="#333" strokeWidth="1.8" /><rect x="18" y="24" width="5" height="9" fill="#999" /><rect x="24" y="16" width="6" height="17" fill="#2f78c4" /><path d="M35 35l15 17" stroke="#333" strokeWidth="2.4" /></svg>
          } />
        </div>
        {/* pdf */}
        <div className="w-[188px] h-[104px] shrink-0 flex">
          <Big w="w-[188px]" left="justify-center pt-[6px]" chev={false} lines={['Create and Share', 'Adobe PDF']} icon={
            <svg className="shrink-0" width="44" height="48" viewBox="0 0 44 48" fill="none" stroke="#2f78c4" strokeWidth="2"><path d="M14 36H1V1h15l15 15v4M16 1v15h15" /><path d="M14 28v19h29V28h-9M28 34V18M22 24l6-6 6 6" /></svg>
          } />
        </div>
      </div>
      {/* formula bar */}
      <div className="h-[44px] shrink-0 bg-white flex items-center">
        <div className="w-[137px] h-full border-r-2 border-[#c9c9c9] flex items-center justify-between pl-[10px] pr-[9px] text-[20px] text-[#222]">
          <span>B5</span>
          <svg width="12" height="30" viewBox="0 0 12 30" fill="#555"><path d="M6 1l5 8H1zM6 29L1 21h10z" /></svg>
        </div>
        <svg className="ml-[24px]" width="20" height="20" viewBox="0 0 20 20" fill="none" stroke="#d0d0d0" strokeWidth="3"><path d="M2 2l16 16M18 2L2 18" /></svg>
        <svg className="ml-[28px]" width="24" height="20" viewBox="0 0 24 20" fill="none" stroke="#d0d0d0" strokeWidth="3"><path d="M1 11l7 7L22 2" /></svg>
        <span className="ml-[26px] w-[24px] text-[27px] italic text-[#333] [font-family:'Liberation_Serif',serif]">fx</span>
        <div className="ml-[14px] w-px h-[26px] bg-[#dcdcdc]" />
        <span className="ml-[11px] text-[21px] text-[#111] whitespace-nowrap">='Set Up Employee Data'!A5</span>
        <div className="flex-1" />
        <svg className="mr-[6px]" width="12" height="10" viewBox="0 0 12 10" fill="#555"><path d="M0 0h12L6 10z" /></svg>
      </div>
      <div className="h-[5px] shrink-0 bg-[#f4f4f4] border-y border-[#bdbdbd]" />
      <Sheet />
      {/* sheet tabs */}
      <div className="h-[45px] shrink-0 bg-[#f0f0f0] border-t border-b-2 border-t-[#dcdcdc] border-b-[#b5b5b5] flex items-center">
        <svg className="ml-[18px] shrink-0" width="12" height="24" viewBox="0 0 12 24" fill="#c4c4c4"><path d="M12 0v24L0 12z" /></svg>
        <svg className="ml-[26px] shrink-0" width="12" height="24" viewBox="0 0 12 24" fill="#666"><path d="M0 0v24l12-12z" /></svg>
        <div className="ml-[26px] shrink-0"><TabSep /></div>
        <div className="ml-[5.5px] flex items-center gap-[5.5px]">
          <SheetTab w="w-[359.5px]" bg="bg-[#ff0000]"><span className="tracking-[0.3px]">Instructions on How to Use----&gt;</span></SheetTab>
          <TabSep />
          <SheetTab w="w-[265px]" bg="bg-[#92d050]" dark>Set Up Employee Data</SheetTab>
          <TabSep />
          <SheetTab w="w-[271px]" bg="bg-[#ffff00]" dark>Employer Payroll Taxes</SheetTab>
          <TabSep />
          <SheetTab w="w-[193px]" bg="bg-[#7030a0]">January Payroll</SheetTab>
          <TabSep />
          <SheetTab w="w-[202px]" bg="bg-[#7030a0]">February Payroll</SheetTab>
          <TabSep />
          <SheetTab w="w-[176px]" bg="bg-[#7030a0]">March Payroll</SheetTab>
          <TabSep />
          <SheetTab w="w-[158px]" bg="bg-[#7030a0]">April Payroll</SheetTab>
          <TabSep />
          <SheetTab w="w-[156px]" bg="bg-[#7030a0]">May Payroll</SheetTab>
          <TabSep />
          <SheetTab w="w-[161px]" bg="bg-[#7030a0]">June Payroll</SheetTab>
          <TabSep />
          <SheetTab w="w-[153px]" bg="bg-[#7030a0]">July Payroll</SheetTab>
          <TabSep />
          <SheetTab w="w-[183px]" bg="bg-[#7030a0]">August Payroll</SheetTab>
          <TabSep />
          <SheetTab w="w-[223px]" bg="bg-[#7030a0]">September Payroll</SheetTab>
          <TabSep />
          <div className="w-[140px] h-[34px] shrink-0 bg-gradient-to-r from-[#7030a0] from-[55%] to-[#f6f6f6] text-white text-[20.5px] tracking-[-0.1px] whitespace-nowrap flex items-center pl-[25px]">
            <span>October Pay</span>
          </div>
        </div>
        <div className="ml-[24px] text-[32px] leading-[32px] text-[#666] font-bold w-[40px]">+</div>
        <div className="ml-[-1px]"><TabSep /></div>
      </div>
      {/* status */}
      <div className="h-[37px] shrink-0 flex items-center text-[#555]">
        <div className="w-[2467px] h-full bg-gradient-to-b from-[#e8e8e8] to-[#cfcfcf] flex items-center pl-[34px] text-[19px]">Ready</div>
        <div className="w-[61px] h-full bg-[#a6a6a6] flex items-center justify-center">
          <svg width="23" height="24" viewBox="0 0 23 24" fill="#fff"><path d="M0 0h7v7H0zM8 0h7v7H8zM16 0h7v7h-7zM0 8h7v7H0zM8 8h7v7H8zM16 8h7v7h-7zM0 16h7v8H0zM8 16h7v8H8zM16 16h7v8h-7z" /></svg>
        </div>
        <div className="flex-1 h-full bg-[#f0f0f0] flex items-center">
          <svg className="ml-[17px]" width="25" height="27" viewBox="0 0 25 27" fill="none" stroke="#555" strokeWidth="1.6"><rect x="1" y="1" width="23" height="25" rx="2" /><path d="M8 7h9M8 11h9M8 15h9M8 19h9" strokeWidth="2" /></svg>
          <svg className="ml-[36px]" width="23" height="27" viewBox="0 0 23 27" fill="none" stroke="#555" strokeWidth="1.6"><rect x="1" y="1" width="21" height="25" /><path d="M1 17h21M8 1v11h7V1" /></svg>
          <div className="ml-[33px] w-[14px] h-[3px] bg-[#777]" />
          <div className="ml-[14px] w-[162px] h-[8px] rounded-full bg-[#9c9c9c] flex items-center">
            <div className="ml-[72px] w-[18px] h-[28px] rounded-full bg-white border border-[#ccc] shrink-0" />
          </div>
          <svg className="ml-[14px]" width="14" height="16" viewBox="0 0 14 16" fill="#777"><path d="M0 6.5h14v3H0zM5.5 0h3v16h-3z" /></svg>
          <span className="ml-[30px] text-[20px] whitespace-nowrap">100%</span>
        </div>
      </div>
      <div className="flex-1 flex">
        <div className="w-[465px] bg-[#6e1414]" />
        <div className="w-[2065px] bg-[#e8e8e8]" />
        <div className="flex-1 bg-[#6e1414]" />
      </div>
    </div>
  );
}
